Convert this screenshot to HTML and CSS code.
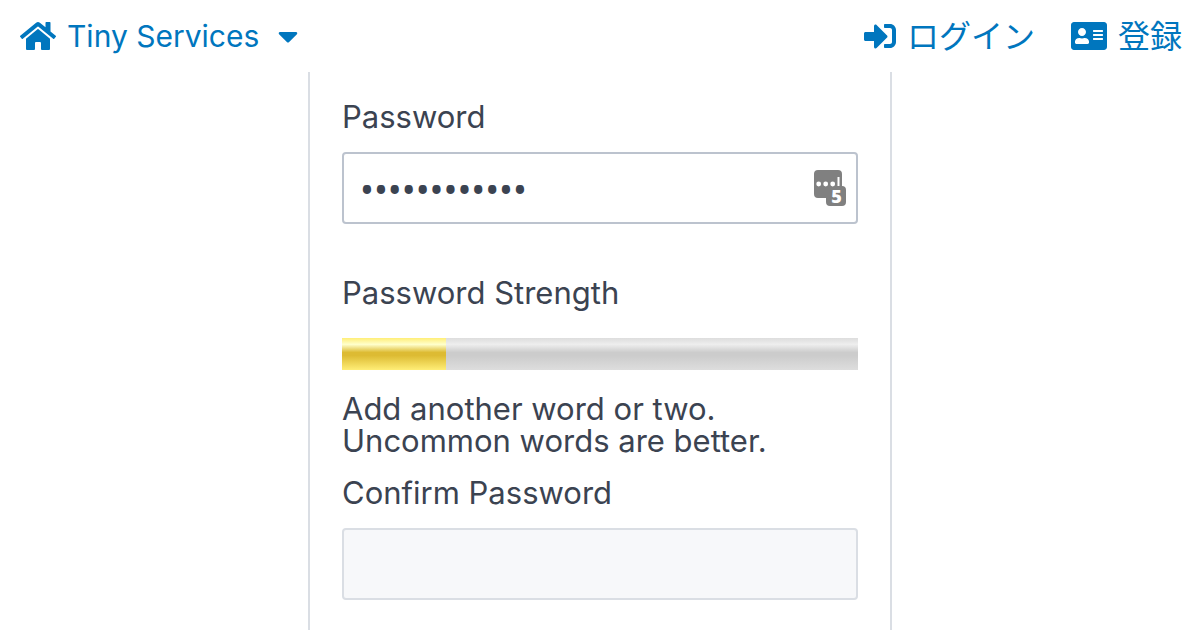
FILE: index.html
```html
<!DOCTYPE html>
<html lang="ja">
<head>
<meta charset="utf-8">
<meta name="viewport" content="width=device-width, initial-scale=1">
<title>Tiny Services</title>
<link rel="stylesheet" href="styles.css">
</head>
<body>
<header class="navbar">
  <button type="button" class="nav-item brand">
    <svg class="icon icon-wide" viewBox="0 0 576 512" aria-hidden="true"><path d="M280.37 148.26L96 300.11V464a16 16 0 0 0 16 16l112.06-.29a16 16 0 0 0 15.92-16V368a16 16 0 0 1 16-16h64a16 16 0 0 1 16 16v95.64a16 16 0 0 0 16 16.05L464 480a16 16 0 0 0 16-16V300L295.67 148.26a12.19 12.19 0 0 0-15.3 0zM571.6 251.47L488 182.56V44.05a12 12 0 0 0-12-12h-56a12 12 0 0 0-12 12v72.61L318.47 43a48 48 0 0 0-61 0L4.34 251.47a12 12 0 0 0-1.6 16.9l25.5 31A12 12 0 0 0 45.15 301l235.22-193.74a12.19 12.19 0 0 1 15.3 0L530.9 301a12 12 0 0 0 16.9-1.6l25.5-31a12 12 0 0 0-1.7-16.93z"/></svg>
    <span>Tiny Services</span>
    <svg class="icon icon-caret" viewBox="0 0 320 512" aria-hidden="true"><path d="M31.3 192h257.3c17.8 0 26.7 21.5 14.1 34.1L174.1 354.8c-7.8 7.8-20.5 7.8-28.3 0L17.2 226.1C4.6 213.5 13.5 192 31.3 192z"/></svg>
  </button>
  <nav class="nav-links">
    <a class="nav-item" href="#login">
      <svg class="icon" viewBox="0 0 512 512" aria-hidden="true"><path d="M416 448h-84c-6.6 0-12-5.4-12-12v-40c0-6.6 5.4-12 12-12h84c17.7 0 32-14.3 32-32V160c0-17.7-14.3-32-32-32h-84c-6.6 0-12-5.4-12-12V76c0-6.6 5.4-12 12-12h84c53 0 96 43 96 96v192c0 53-43 96-96 96zm-47-201L201 79c-15-15-41-4.5-41 17v96H24c-13.3 0-24 10.7-24 24v96c0 13.3 10.7 24 24 24h136v96c0 21.5 26 32 41 17l168-168c9.3-9.4 9.3-24.6 0-34z"/></svg>
      <span class="ja">ログイン</span>
    </a>
    <a class="nav-item" href="#register">
      <svg class="icon icon-wide" viewBox="0 0 576 512" aria-hidden="true"><path d="M528 32H48C21.5 32 0 53.5 0 80v352c0 26.5 21.5 48 48 48h480c26.5 0 48-21.5 48-48V80c0-26.5-21.5-48-48-48zm-352 96c35.3 0 64 28.7 64 64s-28.7 64-64 64-64-28.7-64-64 28.7-64 64-64zm112 236.8c0 10.6-10 19.2-22.4 19.2H86.4C74 384 64 375.4 64 364.8v-19.2c0-31.8 30.1-57.6 67.2-57.6h5c12.3 5.1 25.7 8 39.8 8s27.6-2.9 39.8-8h5c37.1 0 67.2 25.8 67.2 57.6v19.2zM512 312c0 4.4-3.6 8-8 8H360c-4.4 0-8-3.6-8-8v-16c0-4.4 3.6-8 8-8h144c4.4 0 8 3.6 8 8v16zm0-64c0 4.4-3.6 8-8 8H360c-4.4 0-8-3.6-8-8v-16c0-4.4 3.6-8 8-8h144c4.4 0 8 3.6 8 8v16zm0-64c0 4.4-3.6 8-8 8H360c-4.4 0-8-3.6-8-8v-16c0-4.4 3.6-8 8-8h144c4.4 0 8 3.6 8 8v16z"/></svg>
      <span class="ja">登録</span>
    </a>
  </nav>
</header>
<main class="page">
  <form class="card">
    <label class="label" for="password">Password</label>
    <div class="field">
      <input class="input" id="password" type="password" value="abcdefghijkl">
      <button type="button" class="manager" aria-label="Password manager">
        <svg class="manager-icon" viewBox="0 0 32 36" aria-hidden="true">
          <path fill="#808080" d="M4 0h20a4 4 0 0 1 4 4v12a4 4 0 0 1 4 4v12a4 4 0 0 1-4 4H16a4 4 0 0 1-4-4v-4H4a4 4 0 0 1-4-4V4a4 4 0 0 1 4-4z"/>
          <g fill="#fff"><circle cx="4.700" cy="14" r="2.400"/><circle cx="11.700" cy="14" r="2.400"/><circle cx="18.700" cy="14" r="2.400"/><rect x="23.500" y="7" width="2" height="9"/></g>
          <text class="manager-count" x="22.500" y="33" text-anchor="middle">5</text>
        </svg>
      </button>
    </div>
    <label class="label label-strength" for="strength">Password Strength</label>
    <meter class="meter" id="strength" min="0" max="100" low="50" high="75" optimum="100" value="20.2"></meter>
    <p class="hint">Add another word or two.<br>Uncommon words are better.</p>
    <label class="label" for="confirm">Confirm Password</label>
    <input class="input" id="confirm" type="password" disabled>
  </form>
</main>
</body>
</html>
```
FILE: styles.css
```css
* {
  box-sizing: border-box;
}

body {
  margin: 0;
  min-height: 100vh;
  display: flex;
  flex-direction: column;
  background: #fff;
  color: #3b4351;
  font-family: Inter, "Liberation Sans", "Noto Sans CJK JP", sans-serif;
  font-size: 31px;
}

.navbar {
  display: flex;
  justify-content: space-between;
  align-items: center;
  height: 72px;
  padding: 0 18px 0 20px;
}

.nav-links {
  display: flex;
  gap: 36px;
}

.nav-item {
  display: flex;
  align-items: center;
  gap: 11px;
  padding: 0;
  border: 0;
  background: none;
  color: #0076be;
  font: inherit;
  font-size: 30px;
  line-height: 40px;
  text-decoration: none;
  white-space: nowrap;
}

.brand {
  cursor: pointer;
}

.ja {
  padding-bottom: 4px;
  font-family: "Noto Sans CJK JP", sans-serif;
  font-size: 32px;
}

.icon {
  flex: none;
  width: 32px;
  height: 32px;
  fill: currentColor;
}

.icon-wide {
  width: 36px;
}

.icon-caret {
  width: 20px;
  margin-left: 8px;
}

.page {
  flex: 1;
  display: flex;
  justify-content: center;
}

.card {
  width: 100%;
  max-width: 584px;
  padding: 12px 32px 30px;
  border: solid #dadee4;
  border-width: 0 2px;
}

.label {
  display: block;
  padding: 13px 0 15px;
  line-height: 40px;
}

.label-strength {
  margin-top: 36px;
}

.field {
  position: relative;
}

.input {
  display: block;
  width: 100%;
  height: 72px;
  padding: 0 64px 0 16px;
  border: 2px solid #bcc3ce;
  border-radius: 4px;
  background: #fff;
  color: inherit;
  font-family: "Noto Sans", sans-serif;
  font-size: 37px;
  outline: 0;
}

.input:disabled {
  border-color: #dadee4;
  background: #f7f8fa;
}

.manager {
  position: absolute;
  top: 18px;
  right: 12px;
  padding: 0;
  border: 0;
  background: none;
  cursor: pointer;
}

.manager-icon {
  display: block;
  width: 32px;
  height: 36px;
  overflow: visible;
}

.manager-count {
  fill: #fff;
  font-family: "Open Sans", sans-serif;
  font-size: 18px;
  font-weight: 800;
}

.meter {
  -webkit-appearance: none;
  appearance: none;
  display: block;
  width: 100%;
  height: 32px;
  margin-top: 10px;
}

.meter::-webkit-meter-inner-element {
  display: flex;
  height: 100%;
}

.meter::-webkit-meter-bar {
  position: static;
  width: 100%;
  height: 100%;
  margin: 0;
  border: 0;
  border-radius: 0;
  transform: none;
  translate: none;
  background: linear-gradient(to bottom, #ddd, #eee 20%, #ccc 45%, #ccc 55%, #ddd);
}

.meter::-webkit-meter-even-less-good-value,
.meter::-webkit-meter-suboptimum-value {
  background: linear-gradient(to bottom, #fe7, #ffc 20%, #db3 45%, #db3 55%, #fe7);
}

.hint {
  margin: 23px 0 3px;
  line-height: 32px;
}
```
